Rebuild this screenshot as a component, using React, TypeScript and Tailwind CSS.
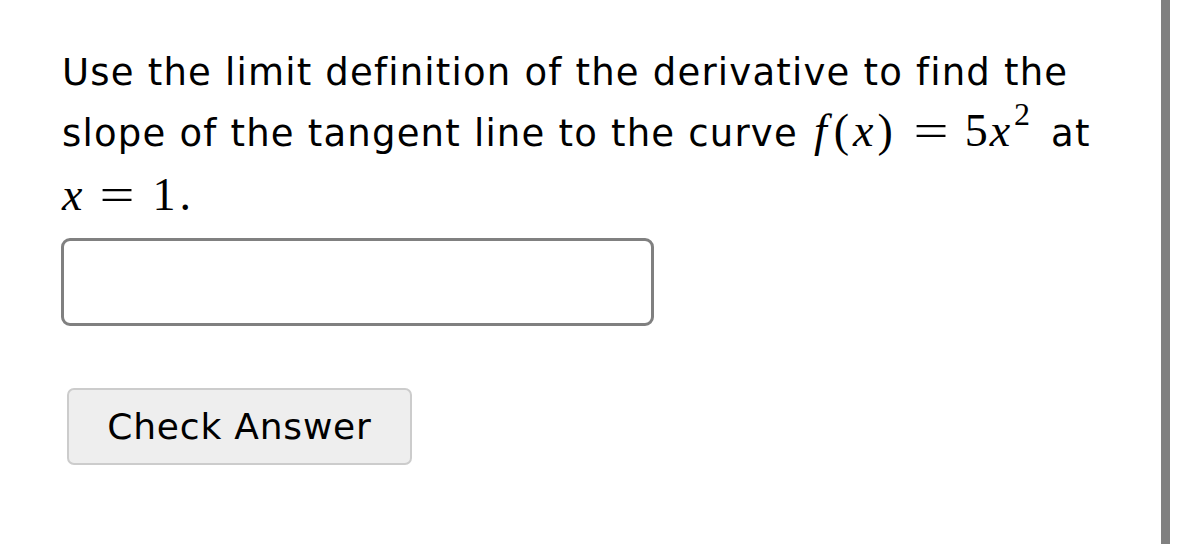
import React from "react";

const M = ({ children, italic = false, className = "" }: { children: React.ReactNode; italic?: boolean; className?: string }) => (
  <span
    className={(italic ? "italic " : "") + className}
    style={{ fontFamily: '"Liberation Serif", "DejaVu Serif", serif' }}
  >
    {children}
  </span>
);

export default function App() {
  return (
    <div className="flex h-[544px] w-[1179px] bg-white">
      <div className="flex-1 pl-[62px] pt-[42px]" style={{ fontFamily: '"DejaVu Sans", sans-serif' }}>
        <div className="text-[37px] leading-[61px] tracking-[1.2px] text-black">
          <div className="whitespace-nowrap">Use the limit definition of the derivative to find the</div>
          <div className="whitespace-nowrap">
            slope of the tangent line to the curve{" "}
            <span className="text-[46px] leading-[0] tracking-normal ml-[3px]">
              <M italic className="mr-[7px]">f</M>
              <M>(</M>
              <M italic className="mx-[4px]">x</M>
              <M>)</M>
              <M className="ml-[25px] mr-[21px] inline-block scale-x-[1.35]">=</M>
              <M className="mr-[2px]">5</M>
              <M italic className="mr-[4px]">x</M>
              <sup className="text-[32px] -top-[21px]">
                <M>2</M>
              </sup>
            </span>
            <span className="ml-[21px]">at</span>
          </div>
          <div className="whitespace-nowrap text-[46px] leading-[61px] tracking-normal">
            <M italic>x</M>
            <M className="ml-[22px] mr-[22px] inline-block scale-x-[1.35]">=</M>
            <M>1</M>
            <M className="ml-[4px]">.</M>
          </div>
        </div>
        <div className="-ml-[1px] mt-[13px] h-[88px] w-[593px] rounded-[9px] border-[3px] border-[#808080] bg-white" />
        <button className="mt-[62px] ml-[5px] h-[77px] w-[345px] rounded-[7px] border-2 border-[#cccccc] bg-[#eeeeee] text-[36px] tracking-[0.8px] text-black">
          Check Answer
        </button>
      </div>
      <div className="w-[9px] bg-[#808080] mr-[9px]" />
    </div>
  );
}
